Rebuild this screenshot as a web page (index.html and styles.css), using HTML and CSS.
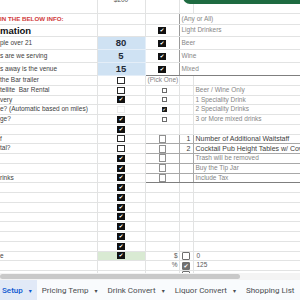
FILE: index.html
```html
<!DOCTYPE html>
<html lang="en">
<head>
    <meta charset="UTF-8">
    <title>Setup</title>
    <link rel="stylesheet" href="styles.css">
</head>
<body>
<div class="app">
    <div class="sheet">
        <div class="btn">Calculate</div>
        <table class="grid">
            <colgroup>
                <col class="col-a">
                <col class="col-b">
                <col class="col-c">
                <col class="col-d">
                <col class="col-e">
            </colgroup>
            <tr class="h20">
                <td class="lbl"></td>
                <td class="mid peek">$200</td>
                <td></td>
                <td></td>
                <td></td>
            </tr>
            <tr class="h11">
                <td class="lbl warn">IN THE BELOW INFO:</td>
                <td></td>
                <td class="bx bx-top bx-left"></td>
                <td class="bx bx-top ov soft">(Any or All)</td>
                <td class="bx bx-top"></td>
            </tr>
            <tr class="h12">
                <td class="lbl title">mation</td>
                <td></td>
                <td class="bx bx-left mid"><i class="cb on"></i></td>
                <td class="bx ov soft">Light Drinkers</td>
                <td class="bx"></td>
            </tr>
            <tr class="h13">
                <td class="lbl">ple over 21</td>
                <td class="val">80</td>
                <td class="bx bx-left mid"><i class="cb on"></i></td>
                <td class="bx ov soft">Beer</td>
                <td class="bx"></td>
            </tr>
            <tr class="h13">
                <td class="lbl">s are we serving</td>
                <td class="val">5</td>
                <td class="bx bx-left mid"><i class="cb on"></i></td>
                <td class="bx ov soft">Wine</td>
                <td class="bx"></td>
            </tr>
            <tr class="h13">
                <td class="lbl">s away is the venue</td>
                <td class="val">15</td>
                <td class="bx bx-left bx-bottom mid"><i class="cb on"></i></td>
                <td class="bx bx-bottom ov soft">Mixed</td>
                <td class="bx bx-bottom"></td>
            </tr>

            <tr class="r">
                <td class="lbl">the Bar trailer</td>
                <td class="mid"><i class="cb"></i></td>
                <td class="soft">(Pick One)</td>
                <td></td>
                <td></td>
            </tr>
            <tr class="r">
                <td class="lbl">tellite&nbsp; Bar Rental</td>
                <td class="mid"><i class="cb"></i></td>
                <td class="mid"><i class="pick"></i></td>
                <td></td>
                <td class="soft">Beer / Wine Only</td>
            </tr>
            <tr class="r">
                <td class="lbl">very</td>
                <td class="mid"><i class="cb on"></i></td>
                <td class="mid"><i class="pick"></i></td>
                <td></td>
                <td class="soft">1 Speciality Drink</td>
            </tr>
            <tr class="r">
                <td class="lbl">e? (Automatic based on miles)</td>
                <td class="mid"><i class="cb off"></i></td>
                <td class="mid"><i class="pick on"></i></td>
                <td></td>
                <td class="soft">2 Speciality Drinks</td>
            </tr>
            <tr class="r">
                <td class="lbl">ge?</td>
                <td class="mid"><i class="cb on"></i></td>
                <td class="mid"><i class="pick"></i></td>
                <td></td>
                <td class="soft">3 or More mixed drinks</td>
            </tr>
            <tr class="r">
                <td class="lbl"></td>
                <td class="mid"><i class="cb on"></i></td>
                <td></td>
                <td></td>
                <td></td>
            </tr>
            <tr class="r">
                <td class="lbl">f</td>
                <td class="mid"><i class="cb"></i></td>
                <td class="lx lx-left lx-top mid"><i class="opt"></i></td>
                <td class="lx lx-top qty">1</td>
                <td class="lx lx-top big">Number of Additional Waitstaff</td>
            </tr>
            <tr class="r">
                <td class="lbl">tal?</td>
                <td class="mid"><i class="cb"></i></td>
                <td class="lx lx-left mid"><i class="opt"></i></td>
                <td class="lx qty">2</td>
                <td class="lx big">Cocktail Pub Height Tables w/ Covers</td>
            </tr>
            <tr class="r">
                <td class="lbl"></td>
                <td class="mid"><i class="cb on"></i></td>
                <td class="lx lx-left mid"><i class="opt"></i></td>
                <td class="lx"></td>
                <td class="lx soft">Trash will be removed</td>
            </tr>
            <tr class="r">
                <td class="lbl"></td>
                <td class="mid"><i class="cb on"></i></td>
                <td class="lx lx-left mid"><i class="opt"></i></td>
                <td class="lx"></td>
                <td class="lx soft">Buy the Tip Jar</td>
            </tr>
            <tr class="r">
                <td class="lbl">rinks</td>
                <td class="mid"><i class="cb on"></i></td>
                <td class="lx lx-left lx-bottom mid"><i class="opt"></i></td>
                <td class="lx lx-bottom"></td>
                <td class="lx lx-bottom soft">Include Tax</td>
            </tr>
            <tr class="r"><td class="lbl"></td><td class="mid"><i class="cb on"></i></td><td></td><td></td><td></td></tr>
            <tr class="r"><td class="lbl"></td><td class="mid"><i class="cb on"></i></td><td></td><td></td><td></td></tr>
            <tr class="r"><td class="lbl"></td><td class="mid"><i class="cb on"></i></td><td></td><td></td><td></td></tr>
            <tr class="r"><td class="lbl"></td><td class="mid"><i class="cb on"></i></td><td></td><td></td><td></td></tr>
            <tr class="r"><td class="lbl"></td><td class="mid"><i class="cb on"></i></td><td></td><td></td><td></td></tr>
            <tr class="r"><td class="lbl"></td><td class="mid"><i class="cb on"></i></td><td></td><td></td><td></td></tr>
            <tr class="r"><td class="lbl"></td><td class="mid"><i class="cb on"></i></td><td></td><td></td><td></td></tr>
            <tr class="r">
                <td class="lbl">e</td>
                <td class="mid ok"><i class="cb on"></i></td>
                <td class="unit">$</td>
                <td class="mid"><i class="gs"></i></td>
                <td class="plain">0</td>
            </tr>
            <tr class="r">
                <td class="lbl"></td>
                <td></td>
                <td class="unit">%</td>
                <td class="mid"><i class="gs on"></i></td>
                <td class="plain">125</td>
            </tr>
            <tr class="r">
                <td class="lbl"></td>
                <td></td>
                <td></td>
                <td class="mid"><i class="gs"></i></td>
                <td></td>
            </tr>
        </table>
    </div>
    <div class="hscroll"><div class="thumb"></div></div>
    <div class="tabs">
        <div class="tab on"><span>Setup</span><span class="arr">&#9662;</span></div>
        <div class="tab"><span>Pricing Temp</span><span class="arr">&#9662;</span></div>
        <div class="tab"><span>Drink Convert</span><span class="arr">&#9662;</span></div>
        <div class="tab"><span>Liquor Convert</span><span class="arr">&#9662;</span></div>
        <div class="tab"><span>Shopping List</span></div>
    </div>
</div>
</body>
</html>
```

FILE: styles.css
```css
* {
    margin: 0;
    padding: 0;
    box-sizing: border-box;
}

body {
    width: 300px;
    height: 300px;
    overflow: hidden;
    background: #fff;
    font-family: "Liberation Sans", Arial, sans-serif;
}

.app {
    display: flex;
    flex-direction: column;
    height: 300px;
}

.sheet {
    flex: none;
    height: 273px;
    overflow: hidden;
    position: relative;
}

/* drawing placed over the sheet */
.btn {
    position: absolute;
    top: -11px;
    left: 183px;
    width: 140px;
    height: 15px;
    border-radius: 7px;
    background: #1e6b41;
    color: #dfeee5;
    font-size: 8px;
    font-weight: bold;
    line-height: 14px;
    text-align: center;
    padding-right: 28px;
    z-index: 2;
}

.grid {
    border-collapse: collapse;
    table-layout: fixed;
    width: 393px;
    margin-top: -7px;
}

.col-a { width: 97px; }
.col-b { width: 48px; }
.col-c { width: 34px; }
.col-d { width: 14px; }
.col-e { width: 200px; }

.h20 { height: 20px; }
.h11 { height: 11px; }
.h12 { height: 12px; }
.h13 { height: 13px; }
.r { height: 9.75px; }

.grid td {
    border: 1px solid #e2e3e3;
    padding: 0 2px;
    white-space: nowrap;
    overflow: visible;
    font-size: 6.5px;
    line-height: 1;
    color: #404040;
    vertical-align: middle;
}

.grid td.lbl {
    border-left: none;
    padding-left: 0;
}

.grid td.mid { text-align: center; padding: 0; }

.grid td.peek {
    vertical-align: top;
    padding-top: 3px;
    color: #555;
}

.grid td.warn {
    color: #d03a3a;
    font-weight: bold;
    font-size: 6.2px;
}

.grid td.title {
    color: #111;
    font-weight: bold;
    font-size: 9.5px;
}

.grid td.val {
    background: #cfe2f3;
    border-color: #e4eef8;
    color: #1f2b38;
    font-weight: bold;
    font-size: 9.5px;
    text-align: center;
}

.grid td.ok { background: #d9ead3; }

.grid td.soft { color: #858585; }
.grid td.big { color: #404040; font-size: 7px; }
.grid td.qty { text-align: right; color: #404040; font-size: 7px; }
.grid td.unit { text-align: right; color: #595959; padding-right: 1px; }
.grid td.plain { color: #595959; padding-left: 3px; }

/* text spilling into the next cell hides the gridline */
.grid td.ov { border-right-style: hidden; }

/* boxed groups */
.grid td.bx { border-color: #e2e3e3; }
.grid td.bx-top { border-top: 1px solid #7f7f7f; }
.grid td.bx-bottom { border-bottom: 1px solid #7f7f7f; }
.grid td.bx-left { border-left: 1px solid #7f7f7f; border-right: 1px solid #9a9a9a; }

.grid td.lx { border: 1px solid #a8a8a8; }
.grid td.lx-top { border-top-color: #7f7f7f; }
.grid td.lx-bottom { border-bottom-color: #7f7f7f; }
.grid td.lx-left { border-left-color: #7f7f7f; }

/* checkboxes */
.cb {
    display: inline-block;
    width: 8px;
    height: 7px;
    border: 1px solid #2b2b2b;
    background: #fff;
    vertical-align: middle;
    font-style: normal;
}

.cb.on {
    background: #111;
    border-color: #111;
}

.cb.on::after,
.pick.on::after,
.gs.on::after {
    content: "\2714";
    display: block;
    color: #fff;
    font-family: "DejaVu Sans", sans-serif;
    text-align: center;
}

.cb.on::after {
    font-size: 5.5px;
    line-height: 5px;
}

.cb.off {
    border-color: #ececec;
}

.pick {
    display: inline-block;
    width: 5px;
    height: 5px;
    border: 1px solid #6a6a6a;
    background: #fff;
    vertical-align: middle;
    margin-left: 4px;
    font-style: normal;
}

.pick.on {
    background: #1a1a1a;
    border-color: #1a1a1a;
}

.pick.on::after {
    font-size: 4px;
    line-height: 3px;
}

.opt {
    display: inline-block;
    width: 7px;
    height: 8px;
    border: 1px solid #8f8f8f;
    background: #fff;
    vertical-align: middle;
}

.gs {
    display: inline-block;
    width: 8px;
    height: 8px;
    border: 1px solid #6f6f6f;
    border-radius: 1px;
    background: #fff;
    vertical-align: middle;
    font-style: normal;
}

.gs.on {
    background: #707070;
    border-color: #707070;
}

.gs.on::after {
    font-size: 6px;
    line-height: 6px;
}

/* horizontal scrollbar */
.hscroll {
    flex: none;
    height: 7px;
    background: #f4f4f4;
    padding: 1px 0;
}

.thumb {
    width: 240px;
    height: 5px;
    border-radius: 3px;
    background: #c9c9c9;
}

/* sheet tabs */
.tabs {
    flex: none;
    height: 20px;
    display: flex;
    background: #f9fbfd;
    margin-left: -3px;
    font-family: Roboto, "Liberation Sans", sans-serif;
    font-size: 8px;
    color: #4a4d50;
}

.tab {
    display: flex;
    align-items: center;
    gap: 6px;
    padding: 0 5px;
    white-space: nowrap;
}

.tab.on {
    background: #e1e9f7;
    color: #0b57d0;
    font-weight: 500;
}

.arr {
    font-family: "DejaVu Sans", sans-serif;
    font-size: 6px;
}
```
